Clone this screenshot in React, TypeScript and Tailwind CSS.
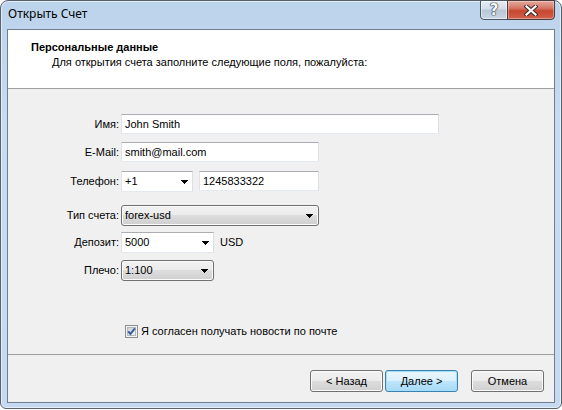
import React from 'react';

// small black combo arrow, pixel style
const Arrow = () => (
  <svg width="7" height="4" viewBox="0 0 7 4" shapeRendering="crispEdges" className="shrink-0">
    <path d="M0 0h7v1H0zM1 1h5v1H1zM2 2h3v1H2zM3 3h1v1H3z" fill="#000" />
  </svg>
);

const TextBox = ({ value, w }: { value: string; w: string }) => (
  <div
    className={`${w} h-[20px] bg-white border border-t-[#abadb3] border-l-[#e2e3ea] border-r-[#dbdfe6] border-b-[#e3e9ef] flex items-center pl-[3px]`}
  >
    {value}
  </div>
);

const EditCombo = ({ value, w }: { value: string; w: string }) => (
  <div
    className={`${w} h-[21px] bg-white border border-t-[#abadb3] border-l-[#e2e3ea] border-r-[#dbdfe6] border-b-[#e3e9ef] flex items-center justify-between pl-[3px] pr-[4px]`}
  >
    <span>{value}</span>
    <Arrow />
  </div>
);

const ListCombo = ({ value, w }: { value: string; w: string }) => (
  <div
    className={`${w} h-[21px] rounded-[3px] border border-[#707070] bg-[linear-gradient(#f2f2f2_0%,#ebebeb_50%,#dddddd_50%,#cfcfcf_100%)] shadow-[inset_0_0_0_1px_#fbfbfb] flex items-center justify-between pl-[3px] pr-[5px]`}
  >
    <span>{value}</span>
    <Arrow />
  </div>
);

const Row = ({ label, className, children }: { label: string; className: string; children: React.ReactNode }) => (
  <div className={`flex items-center gap-[2px] ${className}`}>
    <div className="w-[111px] text-right">{label}</div>
    {children}
  </div>
);

const Checkbox = () => (
  <svg width="13" height="13" viewBox="0 0 13 13" className="shrink-0">
    <defs>
      <linearGradient id="cb" x1="0" y1="0" x2="1" y2="1">
        <stop offset="0" stopColor="#cbcfd5" />
        <stop offset="1" stopColor="#f6f6f6" />
      </linearGradient>
    </defs>
    <rect x="0.5" y="0.5" width="12" height="12" fill="#f4f4f4" stroke="#8e8f8f" />
    <rect x="2.5" y="2.5" width="8" height="8" fill="url(#cb)" stroke="#b4b9bf" />
    <path d="M3.2 6.4 L5.4 8.9 L9.9 3.3" stroke="#3d5d9f" strokeWidth="2" fill="none" />
  </svg>
);

const WinButton = ({ label, def }: { label: string; def?: boolean }) => (
  <div
    className={
      def
        ? 'w-[73px] h-[22px] rounded-[3px] border border-[#3c7fb1] bg-[linear-gradient(#eaf6fd_0%,#d9f0fc_50%,#bee6fd_50%,#a7d9f5_100%)] shadow-[inset_0_0_0_1px_#9fe0fb] flex items-center justify-center'
        : 'w-[73px] h-[22px] rounded-[3px] border border-[#707070] bg-[linear-gradient(#f2f2f2_0%,#ebebeb_50%,#dddddd_50%,#cfcfcf_100%)] shadow-[inset_0_0_0_1px_#fbfbfb] flex items-center justify-center'
    }
  >
    {label}
  </div>
);

export default function App() {
  return (
    <div className="w-[562px] h-[410px] bg-white font-['Liberation_Sans',Arial,sans-serif] text-[11px] leading-[13px] text-black">
      <div className="w-[562px] h-[409px] flex flex-col rounded-t-[8px] rounded-b-[6px] border border-[#58636e] bg-[linear-gradient(180deg,#bcd3ec,#c7dbf1_30%,#c5daf2)] px-[6px] pb-[5px] shadow-[inset_0_0_0_1px_rgba(255,255,255,0.55)]">
        {/* Title bar */}
        <div className="h-[28px] shrink-0 flex items-start justify-between">
          <span className="ml-[1px] mt-[5px] font-['Noto_Sans',sans-serif] text-[12px] leading-[16px]">Открыть Счет</span>
          <div className="flex -mt-[1px]">
            <div className="w-[28px] h-[20px] rounded-bl-[4px] border border-[#4b5864] bg-[linear-gradient(#e6edf5_0%,#d2dde9_45%,#b8c7d7_50%,#c9d6e4_100%)] shadow-[inset_0_0_0_1px_rgba(255,255,255,0.5)] flex items-center justify-center">
              <span className="font-['DejaVu_Sans',sans-serif] font-bold text-[15px] leading-[15px] text-white [text-shadow:0_0_1px_#2b3540,0_0_1px_#2b3540,0_0_1px_#2b3540,0_0_1px_#2b3540]">?</span>
            </div>
            <div className="w-[48px] h-[20px] -ml-[1px] rounded-br-[4px] border border-[#4b3c3a] bg-[linear-gradient(#e4a89d_0%,#d67666_40%,#c7462f_55%,#d2614c_100%)] shadow-[inset_0_0_0_1px_rgba(255,255,255,0.35)] flex items-center justify-center">
              <svg width="14" height="11" viewBox="0 0 14 11">
                <path d="M2.5 1.5 L11.5 9.5 M11.5 1.5 L2.5 9.5" stroke="#3a2a28" strokeWidth="4.2" strokeLinecap="square" />
                <path d="M2.5 1.5 L11.5 9.5 M11.5 1.5 L2.5 9.5" stroke="#fff" strokeWidth="2.2" strokeLinecap="square" />
              </svg>
            </div>
          </div>
        </div>

        {/* Client area */}
        <div className="flex-1 flex flex-col border border-[#6f7f90] bg-[#f0f0f0]">
          {/* Header */}
          <div className="h-[59px] shrink-0 bg-white border-b border-[#a0a0a0] pt-[11px]">
            <div className="pl-[23px] font-bold">Персональные данные</div>
            <div className="pl-[44px] mt-[2px]">Для открытия счета заполните следующие поля, пожалуйста:</div>
          </div>

          {/* Form */}
          <div className="flex-1 flex flex-col">
            <Row label="Имя:" className="mt-[25px]">
              <TextBox value="John Smith" w="w-[318px]" />
            </Row>
            <Row label="E-Mail:" className="mt-[8px]">
              <TextBox value="smith@mail.com" w="w-[198px]" />
            </Row>
            <Row label="Телефон:" className="mt-[9px]">
              <div className="flex gap-[6px]">
                <EditCombo value="+1" w="w-[72px]" />
                <TextBox value="1245833322" w="w-[120px]" />
              </div>
            </Row>
            <Row label="Тип счета:" className="mt-[13px]">
              <ListCombo value="forex-usd" w="w-[198px]" />
            </Row>
            <Row label="Депозит:" className="mt-[6px]">
              <EditCombo value="5000" w="w-[93px]" />
              <span className="ml-[4px]">USD</span>
            </Row>
            <Row label="Плечо:" className="mt-[7px]">
              <ListCombo value="1:100" w="w-[93px]" />
            </Row>
            <div className="mt-[44px] pl-[117px] flex items-center gap-[3px]">
              <Checkbox />
              <span>Я согласен получать новости по почте</span>
            </div>
          </div>

          {/* Footer */}
          <div className="h-[48px] shrink-0 border-t border-[#a0a0a0] pt-[15px] pr-[10px] flex items-start justify-end">
            <WinButton label="< Назад" />
            <div className="ml-[2px]">
              <WinButton label="Далее >" def />
            </div>
            <div className="ml-[13px]">
              <WinButton label="Отмена" />
            </div>
          </div>
        </div>
      </div>
    </div>
  );
}
